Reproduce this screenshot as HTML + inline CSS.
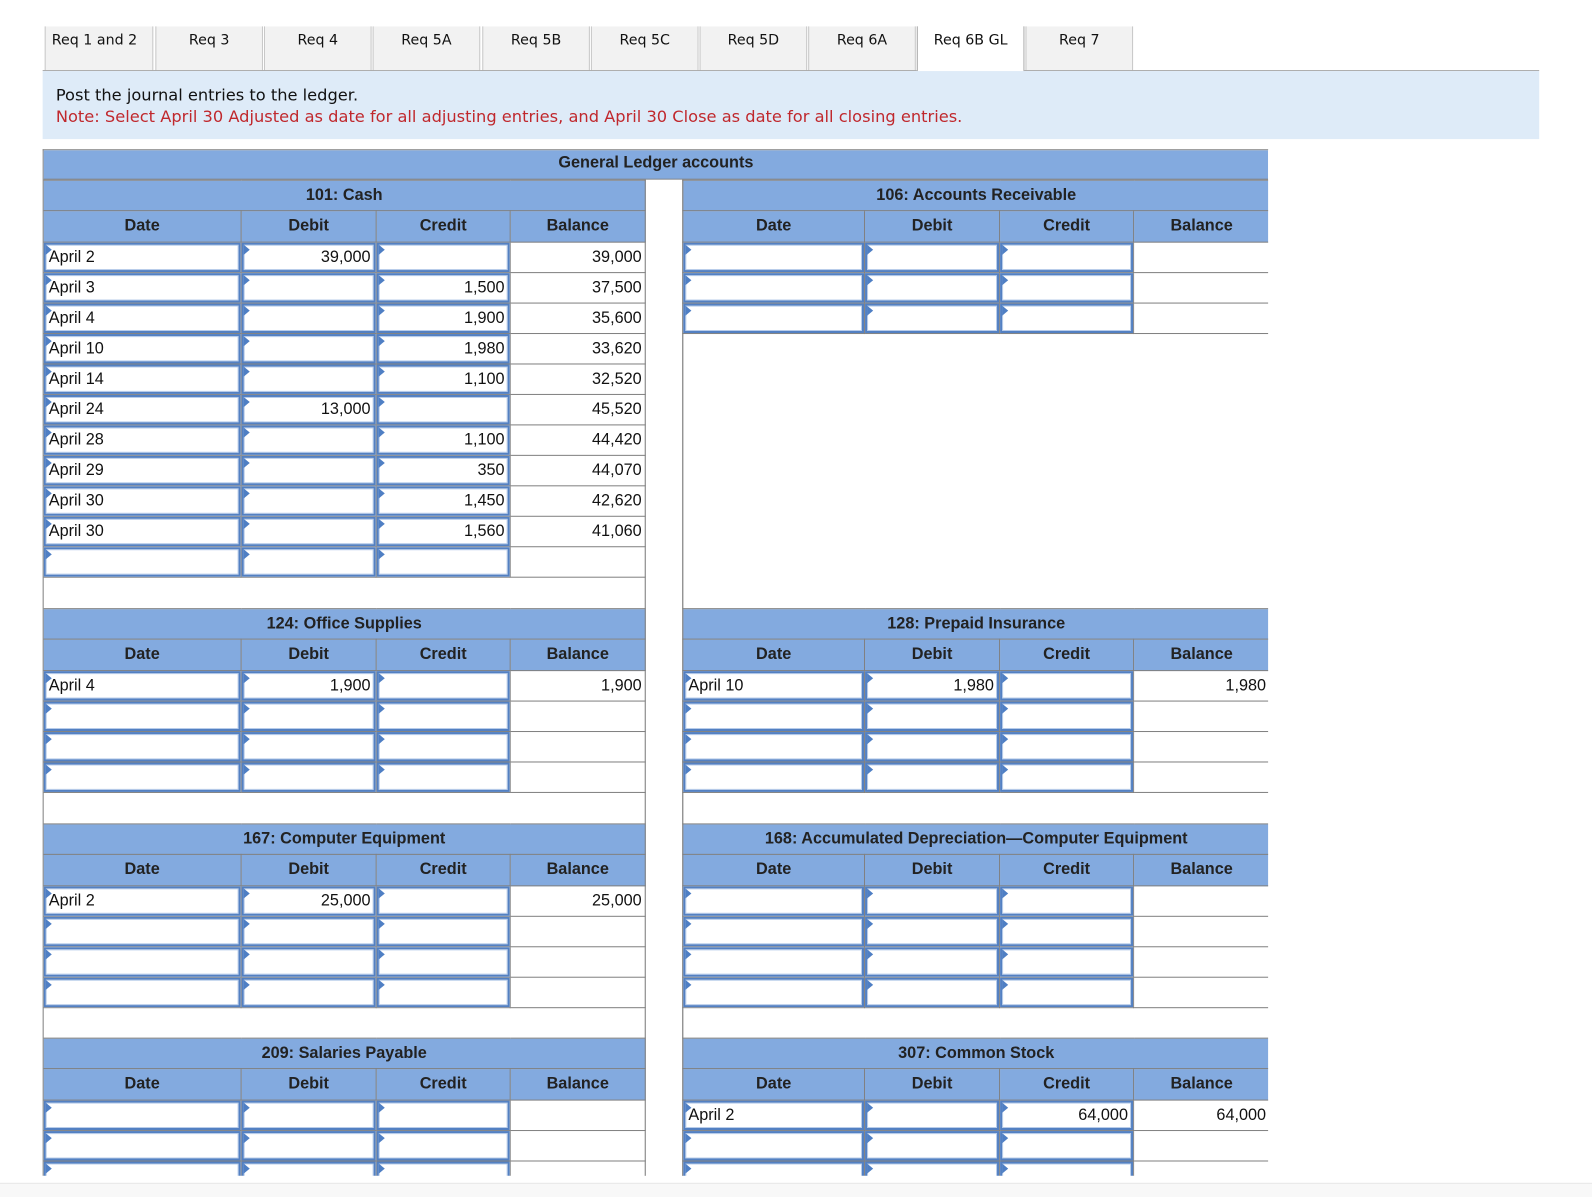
<!DOCTYPE html>
<html style="overflow:hidden;width:1592px;height:1197px"><head><meta charset="utf-8">
<style>
*{box-sizing:border-box;margin:0;padding:0}
body{width:1592px;height:1197px;background:#fff;position:relative;overflow:hidden;font-family:"Liberation Sans",Arial,sans-serif;color:#111}
#clip{position:absolute;left:0;top:0;width:1592px;height:1197px;overflow:hidden}
#w{position:absolute;left:0;top:0;width:1592px;height:1197px;transform:scale(1.0153,1.0153);transform-origin:0 0}
.tabs{position:absolute;left:44px;top:26px;height:44px}
.tab{position:absolute;top:0;height:44px;background:#f2f2f2;border-left:1px solid #c8c8c8;border-right:1px solid #c8c8c8;font-family:"DejaVu Sans",Verdana,sans-serif;font-size:14px;line-height:28px;text-align:center;color:#111}
.tab.act{background:#fff;border-color:#aaa}
.tabline{position:absolute;left:42px;top:69px;width:1474px;height:1px;background:#aaa}
.band{position:absolute;left:42px;top:70px;width:1474px;height:67px;background:#deebf8;font-family:"DejaVu Sans",Verdana,sans-serif;font-size:16px;padding:13px 0 0 13px;line-height:21px}
.band .r{color:#c0282d}
.outer{position:absolute;left:42px;top:147px;width:1207px;height:1011px;overflow:hidden;border-left:1px solid #808080;border-top:1px solid #808080}
.gh{position:absolute;left:0;top:0;width:1206px;height:29px;background:#83aadf;border-bottom:1px solid #808080;text-align:center;font-weight:bold;font-size:16px;line-height:26px;color:#222}
table{position:absolute;border-collapse:collapse;table-layout:fixed}
td{border:1px solid #808080;height:30px;padding:0;font-size:16px}
td.t{background:#83aadf;text-align:center;font-weight:bold;color:#222;line-height:26px}
td.h{background:#83aadf;text-align:center;font-weight:bold;color:#222;height:31px}
td.b{background:#fff;text-align:right;padding-right:3px}
td.blank{background:#fff}
td.i{padding:0}
td.i div{position:relative;height:29px;border:2px solid #5380c2;box-shadow:inset 0 0 0 1px #b9cdea;background:#fff;line-height:25px;padding:0 3px}
td.i div:before{content:"";position:absolute;left:0;top:0;border-left:6px solid #4f7fc4;border-top:5px solid transparent;border-bottom:5px solid transparent;height:0}
td.i div.n{text-align:right}
.gap{position:absolute;left:592px;top:29px;width:38px;height:1000px;background:#fff;border-left:1px solid #808080;border-right:1px solid #808080}
.foot{position:absolute;left:0;top:1165px;width:1600px;height:60px;background:#f8f8f8;border-top:1px solid #e8e8e8}
</style></head><body><div id="clip"><div id="w">
<div class="tabs">
<div class="tab" style="left:0;width:107px;text-align:left;padding-left:6px">Req 1 and 2</div>
<div class="tab" style="left:109px;width:106px">Req 3</div>
<div class="tab" style="left:216px;width:106px">Req 4</div>
<div class="tab" style="left:323px;width:106px">Req 5A</div>
<div class="tab" style="left:431px;width:106px">Req 5B</div>
<div class="tab" style="left:538px;width:106px">Req 5C</div>
<div class="tab" style="left:645px;width:106px">Req 5D</div>
<div class="tab" style="left:752px;width:106px">Req 6A</div>
<div class="tab act" style="left:859px;width:106px;height:45px">Req 6B GL</div>
<div class="tab" style="left:966px;width:106px">Req 7</div>
</div>
<div class="tabline"></div>
<div class="tab act" style="left:903px;top:26px;width:106px;height:44px;border-bottom:none;position:absolute">Req 6B GL</div>
<div class="band">Post the journal entries to the ledger.<br><span class="r">Note: Select April 30 Adjusted as date for all adjusting entries, and April 30 Close as date for all closing entries.</span></div>

<div class="outer">
<div class="gh">General Ledger accounts</div>
<div class="gap"></div>
<table style="left:-1px;top:29px;width:593px">
<colgroup><col style="width:195px"><col style="width:133px"><col style="width:132px"><col style="width:133px"></colgroup>
<tr><td class="t" colspan="4">101: Cash</td></tr>
<tr><td class="h">Date</td><td class="h">Debit</td><td class="h">Credit</td><td class="h">Balance</td></tr>
<tr><td class="i"><div>April 2</div></td><td class="i"><div class="n">39,000</div></td><td class="i"><div></div></td><td class="b">39,000</td></tr>
<tr><td class="i"><div>April 3</div></td><td class="i"><div></div></td><td class="i"><div class="n">1,500</div></td><td class="b">37,500</td></tr>
<tr><td class="i"><div>April 4</div></td><td class="i"><div></div></td><td class="i"><div class="n">1,900</div></td><td class="b">35,600</td></tr>
<tr><td class="i"><div>April 10</div></td><td class="i"><div></div></td><td class="i"><div class="n">1,980</div></td><td class="b">33,620</td></tr>
<tr><td class="i"><div>April 14</div></td><td class="i"><div></div></td><td class="i"><div class="n">1,100</div></td><td class="b">32,520</td></tr>
<tr><td class="i"><div>April 24</div></td><td class="i"><div class="n">13,000</div></td><td class="i"><div></div></td><td class="b">45,520</td></tr>
<tr><td class="i"><div>April 28</div></td><td class="i"><div></div></td><td class="i"><div class="n">1,100</div></td><td class="b">44,420</td></tr>
<tr><td class="i"><div>April 29</div></td><td class="i"><div></div></td><td class="i"><div class="n">350</div></td><td class="b">44,070</td></tr>
<tr><td class="i"><div>April 30</div></td><td class="i"><div></div></td><td class="i"><div class="n">1,450</div></td><td class="b">42,620</td></tr>
<tr><td class="i"><div>April 30</div></td><td class="i"><div></div></td><td class="i"><div class="n">1,560</div></td><td class="b">41,060</td></tr>
<tr><td class="i"><div></div></td><td class="i"><div></div></td><td class="i"><div></div></td><td class="b"></td></tr>
<tr><td class="blank" colspan="4" style="height:31px"></td></tr>
<tr><td class="t" colspan="4">124: Office Supplies</td></tr>
<tr><td class="h">Date</td><td class="h">Debit</td><td class="h">Credit</td><td class="h">Balance</td></tr>
<tr><td class="i"><div>April 4</div></td><td class="i"><div class="n">1,900</div></td><td class="i"><div></div></td><td class="b">1,900</td></tr>
<tr><td class="i"><div></div></td><td class="i"><div></div></td><td class="i"><div></div></td><td class="b"></td></tr>
<tr><td class="i"><div></div></td><td class="i"><div></div></td><td class="i"><div></div></td><td class="b"></td></tr>
<tr><td class="i"><div></div></td><td class="i"><div></div></td><td class="i"><div></div></td><td class="b"></td></tr>
<tr><td class="blank" colspan="4" style="height:31px"></td></tr>
<tr><td class="t" colspan="4">167: Computer Equipment</td></tr>
<tr><td class="h">Date</td><td class="h">Debit</td><td class="h">Credit</td><td class="h">Balance</td></tr>
<tr><td class="i"><div>April 2</div></td><td class="i"><div class="n">25,000</div></td><td class="i"><div></div></td><td class="b">25,000</td></tr>
<tr><td class="i"><div></div></td><td class="i"><div></div></td><td class="i"><div></div></td><td class="b"></td></tr>
<tr><td class="i"><div></div></td><td class="i"><div></div></td><td class="i"><div></div></td><td class="b"></td></tr>
<tr><td class="i"><div></div></td><td class="i"><div></div></td><td class="i"><div></div></td><td class="b"></td></tr>
<tr><td class="blank" colspan="4"></td></tr>
<tr><td class="t" colspan="4">209: Salaries Payable</td></tr>
<tr><td class="h">Date</td><td class="h">Debit</td><td class="h">Credit</td><td class="h">Balance</td></tr>
<tr><td class="i"><div></div></td><td class="i"><div></div></td><td class="i"><div></div></td><td class="b"></td></tr>
<tr><td class="i"><div></div></td><td class="i"><div></div></td><td class="i"><div></div></td><td class="b"></td></tr>
<tr><td class="i"><div></div></td><td class="i"><div></div></td><td class="i"><div></div></td><td class="b"></td></tr>
</table>

<table style="left:629px;top:29px;width:578px">
<colgroup><col style="width:179px"><col style="width:133px"><col style="width:132px"><col style="width:134px"></colgroup>
<tr><td class="t" colspan="4">106: Accounts Receivable</td></tr>
<tr><td class="h">Date</td><td class="h">Debit</td><td class="h">Credit</td><td class="h">Balance</td></tr>
<tr><td class="i"><div></div></td><td class="i"><div></div></td><td class="i"><div></div></td><td class="b"></td></tr>
<tr><td class="i"><div></div></td><td class="i"><div></div></td><td class="i"><div></div></td><td class="b"></td></tr>
<tr><td class="i"><div></div></td><td class="i"><div></div></td><td class="i"><div></div></td><td class="b"></td></tr>
<tr><td class="blank" colspan="4" style="height:271px"></td></tr>
<tr><td class="t" colspan="4">128: Prepaid Insurance</td></tr>
<tr><td class="h">Date</td><td class="h">Debit</td><td class="h">Credit</td><td class="h">Balance</td></tr>
<tr><td class="i"><div>April 10</div></td><td class="i"><div class="n">1,980</div></td><td class="i"><div></div></td><td class="b">1,980</td></tr>
<tr><td class="i"><div></div></td><td class="i"><div></div></td><td class="i"><div></div></td><td class="b"></td></tr>
<tr><td class="i"><div></div></td><td class="i"><div></div></td><td class="i"><div></div></td><td class="b"></td></tr>
<tr><td class="i"><div></div></td><td class="i"><div></div></td><td class="i"><div></div></td><td class="b"></td></tr>
<tr><td class="blank" colspan="4" style="height:31px"></td></tr>
<tr><td class="t" colspan="4">168: Accumulated Depreciation—Computer Equipment</td></tr>
<tr><td class="h">Date</td><td class="h">Debit</td><td class="h">Credit</td><td class="h">Balance</td></tr>
<tr><td class="i"><div></div></td><td class="i"><div></div></td><td class="i"><div></div></td><td class="b"></td></tr>
<tr><td class="i"><div></div></td><td class="i"><div></div></td><td class="i"><div></div></td><td class="b"></td></tr>
<tr><td class="i"><div></div></td><td class="i"><div></div></td><td class="i"><div></div></td><td class="b"></td></tr>
<tr><td class="i"><div></div></td><td class="i"><div></div></td><td class="i"><div></div></td><td class="b"></td></tr>
<tr><td class="blank" colspan="4"></td></tr>
<tr><td class="t" colspan="4">307: Common Stock</td></tr>
<tr><td class="h">Date</td><td class="h">Debit</td><td class="h">Credit</td><td class="h">Balance</td></tr>
<tr><td class="i"><div>April 2</div></td><td class="i"><div></div></td><td class="i"><div class="n">64,000</div></td><td class="b">64,000</td></tr>
<tr><td class="i"><div></div></td><td class="i"><div></div></td><td class="i"><div></div></td><td class="b"></td></tr>
<tr><td class="i"><div></div></td><td class="i"><div></div></td><td class="i"><div></div></td><td class="b"></td></tr>
</table>
</div>
<div class="foot"></div>
</div></div></body></html>
